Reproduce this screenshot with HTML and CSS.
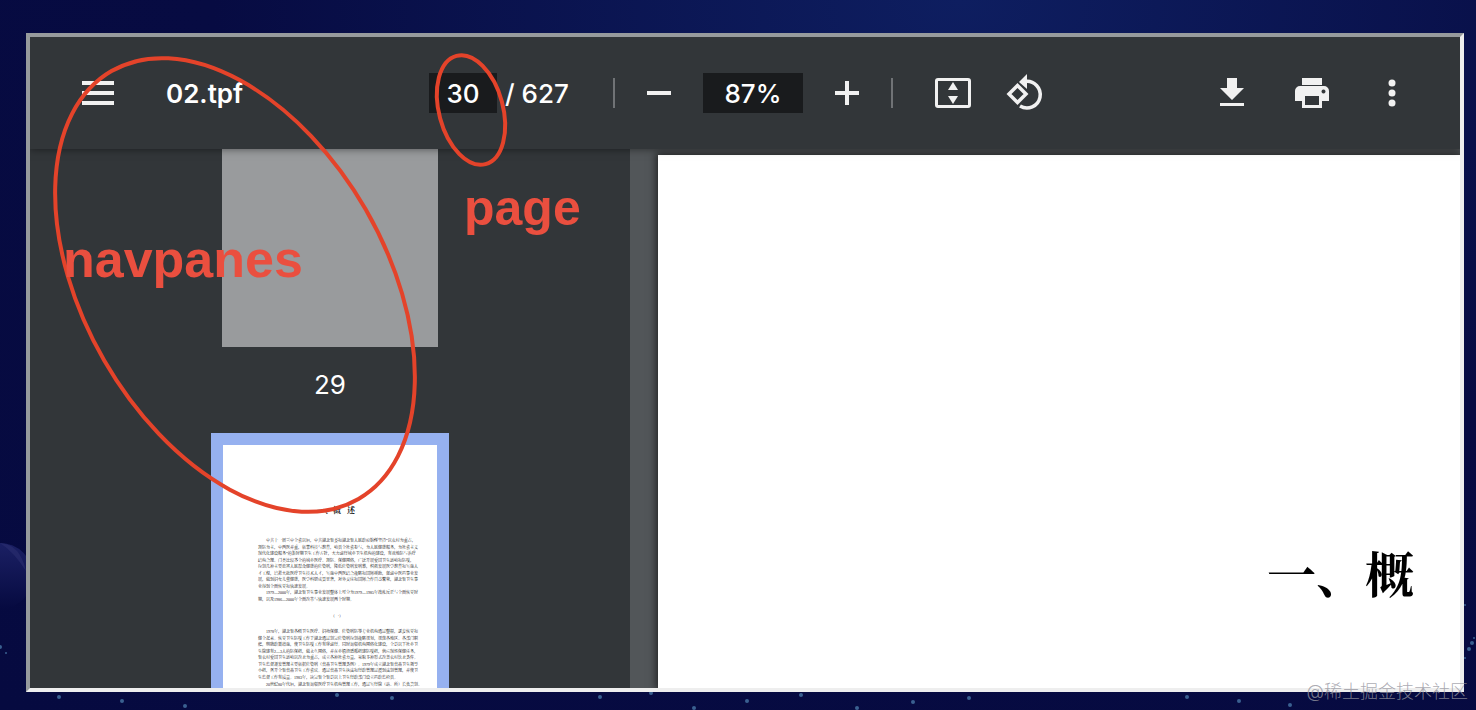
FILE: index.html
```html
<!DOCTYPE html>
<html lang="zh-CN">
<head>
    <meta charset="UTF-8">
    <meta name="viewport" content="width=device-width, initial-scale=1.0">
    <title>02.tpf</title>
    <link rel="stylesheet" href="styles.css">
</head>
<body>
    <!-- Night sky behind the viewer -->
    <svg class="stars" viewBox="0 0 1476 710" preserveAspectRatio="none" aria-hidden="true">
        <defs>
            <linearGradient id="planet" x1="0" y1="0" x2="0" y2="1">
                <stop offset="0" stop-color="#1b2064"/>
                <stop offset="1" stop-color="#060a40"/>
            </linearGradient>
        </defs>
        <circle cx="0" cy="576" r="33" fill="url(#planet)"/>
        <path d="M0 543 Q20 544 26 571 Q14 552 0 543Z" fill="#2b2f70" opacity="0.6"/>
        <g fill="#3a6090">
            <circle cx="0" cy="647" r="2"/><circle cx="6" cy="653" r="1"/>
            <circle cx="59" cy="697" r="2"/><circle cx="122" cy="701" r="2"/>
            <circle cx="185" cy="706" r="2"/><circle cx="337" cy="695" r="2"/>
            <circle cx="392" cy="698" r="2"/><circle cx="600" cy="697" r="2"/>
            <circle cx="651" cy="693" r="2"/><circle cx="694" cy="708" r="2"/>
            <circle cx="747" cy="701" r="2"/><circle cx="801" cy="695" r="2"/>
            <circle cx="857" cy="708" r="2"/><circle cx="913" cy="702" r="2"/>
            <circle cx="969" cy="698" r="2"/><circle cx="1187" cy="697" r="2"/>
            <circle cx="1239" cy="701" r="2"/><circle cx="1290" cy="705" r="2"/>
            <circle cx="1465" cy="605" r="1"/><circle cx="1474" cy="638" r="1"/>
            <circle cx="1472" cy="643" r="2"/><circle cx="1469" cy="649" r="2"/>
            <circle cx="1465" cy="658" r="1"/>
        </g>
    </svg>

    <main class="viewer">
        <header class="toolbar">
            <div class="tools-left">
                <button class="icon-btn" aria-label="Menu">
                    <svg viewBox="0 0 20 20"><path d="M2 4h16v2H2zM2 9h16v2H2zM2 14h16v2H2z"/></svg>
                </button>
                <span class="title">02.tpf</span>
            </div>
            <div class="tools-center">
                <input class="page-input" type="text" value="30" aria-label="Page number">
                <span class="page-total">/ 627</span>
                <span class="divider"></span>
                <button class="icon-btn" aria-label="Zoom out">
                    <svg viewBox="0 0 20 20"><path d="M4 9h12v2H4z"/></svg>
                </button>
                <input class="zoom-input" type="text" value="87%" aria-label="Zoom level">
                <button class="icon-btn" aria-label="Zoom in">
                    <svg viewBox="0 0 20 20"><path d="M4 9h5V4h2v5h5v2h-5v5H9v-5H4z"/></svg>
                </button>
                <span class="divider"></span>
                <button class="icon-btn" aria-label="Fit to page">
                    <svg viewBox="0 0 40 40"><path fill-rule="evenodd" d="M5 5h30a3 3 0 0 1 3 3v24a3 3 0 0 1-3 3H5a3 3 0 0 1-3-3V8a3 3 0 0 1 3-3zm0 3v24h30V8zM20 9l5 8H15zM20 31l-5-8h10z"/></svg>
                </button>
                <button class="icon-btn rotate" aria-label="Rotate">
                    <svg viewBox="0 0 40 40">
                        <path d="M22 1v15l-8-7z"/>
                        <path d="M4 21l8.500-8.500L21 21l-8.500 8.500z" fill="none" stroke="#f1f1f1" stroke-width="3.500"/>
                        <path d="M20 8.500a13.300 13.300 0 1 1-5 24.500" fill="none" stroke="#f1f1f1" stroke-width="3.500"/>
                    </svg>
                </button>
            </div>
            <div class="tools-right">
                <button class="icon-btn" aria-label="Download">
                    <svg viewBox="0 0 40 40"><path d="M15 5h10v10h7L20 27 8 15h7zM8 30h24v3H8z"/></svg>
                </button>
                <button class="icon-btn" aria-label="Print">
                    <svg viewBox="0 0 40 40"><path fill-rule="evenodd" d="M10 5h20v7H10zM8 13h24a5 5 0 0 1 5 5v10h-7v7H10v-7H3V18a5 5 0 0 1 5-5zm5 10v9h14v-9zM31.500 16.500a2 2 0 1 0 .01 0z"/></svg>
                </button>
                <button class="icon-btn" aria-label="More actions">
                    <svg viewBox="0 0 40 40"><circle cx="20" cy="10" r="3.500"/><circle cx="20" cy="20" r="3.500"/><circle cx="20" cy="30" r="3.500"/></svg>
                </button>
            </div>
        </header>

        <div class="content">
            <aside class="sidebar">
                <div class="thumb-blank"></div>
                <span class="thumb-label">29</span>
                <div class="thumb-active">
                    <!-- Drawn at twice the thumbnail size -->
                    <svg viewBox="0 0 428 606">
                        <text class="thumb-title" x="188" y="136">一、概&#160;&#160;&#160;述</text>
                        <g class="thumb-text">
                            <text x="86" y="194">中共十一届三中全会以后，中共湖北省委和湖北省人民政府始终坚持“以农村为重点，</text>
                            <text x="70" y="207">预防为主，中西医并重，依靠科技与教育，动员全社会参与，为人民健康服务，为社会主义</text>
                            <text x="70" y="220">现代化建设服务”的新时期卫生工作方针，大力进行城乡卫生机构的建设，有效地防与治疗</text>
                            <text x="70" y="233">结构合理、门类比较齐全的城乡医疗、预防、保健网络，广泛开展爱国卫生运动和防疫，</text>
                            <text x="70" y="246">控制几种主要危害人民群众健康的传染病，降低传染病发病率，积极发展医学教育和实施人</text>
                            <text x="70" y="259">才工程，培养大批医疗卫生技术人才，实施中西医结合战略和国际援助，促进中医药事业发</text>
                            <text x="70" y="272">展，做到妇女儿童健康，医学科研成果显著，对外交往和国际合作日益繁荣，湖北省卫生事</text>
                            <text x="70" y="285">业得到全面恢复和快速发展。</text>
                            <text x="86" y="298">1979—2000年，湖北省卫生事业发展整体上可分为1979—1985年拨乱反正与全面恢复时</text>
                            <text x="70" y="312">期，以及1986—2000年全面改革与快速发展两个时期。</text>
                            <text x="216" y="346">（一）</text>
                            <text x="86" y="376">1978年，湖北省各级卫生医疗、妇幼保健、传染病防等专业机构通过整顿，逐步恢复和</text>
                            <text x="70" y="389">健全起来。恢复卫生防疫工作于湖北通过制定传染病控制战略规划，规范各地区、各部门职</text>
                            <text x="70" y="402">能，明确政策措施，使卫生防疫工作有序进行。同时加强机构网络化建设，全县以下社乡卫</text>
                            <text x="70" y="415">生院建有2—3人的防保组，做永久网络，并在乡镇街道都组建防疫组，供应现场保健任务，</text>
                            <text x="70" y="428">省农村爱国卫生运动以改水为重点，成立各种社会力量，采取多种形式改善农村饮水条件。</text>
                            <text x="70" y="441">卫生监督颁发管理主要依据传染病《食品卫生管理条例》。1979年成立湖北省食品卫生领导</text>
                            <text x="70" y="454">小组，召开全省食品卫生工作会议。通过食品卫生执法和行政管理过渡到法制管理，并使卫</text>
                            <text x="70" y="467">生监督工作有质量。1983年，决定省全省县以上卫生行政部门设立药政监检员。</text>
                            <text x="86" y="481">20世纪80年代后，湖北省加强医疗卫生机构管理工作，通过实行院（站、所）长负责制、</text>
                        </g>
                    </svg>
                </div>
            </aside>
            <section class="document">
                <article class="page">
                    <h1>一、概</h1>
                </article>
            </section>
        </div>
    </main>

    <!-- Hand-drawn notes on top of the viewer -->
    <div class="notes">
        <svg viewBox="0 0 1476 710">
            <ellipse cx="235" cy="285" rx="247" ry="151" transform="rotate(60 235 285)"/>
            <ellipse cx="471" cy="110" rx="56" ry="32" transform="rotate(75 471 110)"/>
        </svg>
        <span class="note note-nav">navpanes</span>
        <span class="note note-page">page</span>
    </div>
    <span class="watermark">@稀土掘金技术社区</span>
</body>
</html>
```

FILE: styles.css
```css
* {
    margin: 0;
    padding: 0;
    box-sizing: border-box;
}

body {
    position: relative;
    display: flex;
    height: 100vh;
    padding: 33px 12px 18px 26px;
    overflow: hidden;
    font-family: Inter, "Noto Sans CJK SC", sans-serif;
    font-size: 26px;
    color: #fff;
    background: radial-gradient(ellipse at 65% 0, #0e1e60 0%, #070b42 55%, #060a40 100%);
}

.stars {
    position: absolute;
    top: 0;
    left: 0;
    width: 100%;
    height: 100%;
}

.viewer {
    position: relative;
    z-index: 0;
    flex: 1;
    display: flex;
    flex-direction: column;
    min-width: 0;
    overflow: hidden;
    border: 4px solid;
    border-color: #979b9d #eeeeee #eeeeee #979b9d;
    background: #323639;
}

/* Toolbar */
.toolbar {
    position: relative;
    z-index: 1;
    display: grid;
    grid-template-columns: 1fr auto 1fr;
    align-items: center;
    height: 112px;
    padding: 0 48px;
    background: #323639;
    box-shadow: 0 0 8px rgba(0, 0, 0, 0.5);
}

.tools-left,
.tools-center,
.tools-right {
    display: flex;
    align-items: center;
}

.tools-left {
    gap: 48px;
}

.tools-center {
    padding-right: 16px;
}

.tools-right {
    gap: 40px;
    justify-content: flex-end;
}

.title {
    font-weight: 600;
}

.icon-btn {
    width: 40px;
    height: 40px;
    border: none;
    background: none;
    cursor: pointer;
}

.icon-btn svg {
    display: block;
    width: 40px;
    height: 40px;
    fill: #f1f1f1;
}

.toolbar input {
    height: 40px;
    border: none;
    background: #191b1d;
    color: #fff;
    font-family: inherit;
    font-size: 26px;
    font-weight: 500;
    text-align: center;
}

.page-input {
    width: 68px;
}

.zoom-input {
    width: 100px;
    margin: 0 24px;
}

.page-total {
    width: 92px;
    margin-left: 8px;
    font-weight: 500;
    white-space: nowrap;
}

.divider {
    width: 2px;
    height: 30px;
    margin: 0 24px 0 16px;
    background: #707376;
}

.icon-btn + .divider {
    margin: 0 40px 0 24px;
}

.rotate {
    margin-left: 32px;
}

/* Sidebar and document */
.content {
    flex: 1;
    display: flex;
    min-height: 0;
}

.sidebar {
    flex: 0 0 600px;
    display: flex;
    flex-direction: column;
    align-items: center;
    overflow: hidden;
}

.thumb-blank {
    flex: none;
    width: 216px;
    height: 198px;
    background: #999b9d;
}

.thumb-label {
    flex: none;
    margin: 22px 0 32px;
    line-height: 32px;
}

.thumb-active {
    flex: none;
    width: 238px;
    border: 12px solid #96b1f0;
    background: #fff;
}

.thumb-active svg {
    display: block;
    width: 100%;
}

.thumb-title {
    font-family: "Noto Serif CJK SC", "Noto Sans CJK SC", serif;
    font-size: 16px;
    font-weight: 700;
    fill: #222;
}

.thumb-text {
    font-family: "Liberation Serif", "Noto Serif CJK SC", "Noto Sans CJK SC", serif;
    font-size: 8px;
    fill: #111;
}

.document {
    flex: 1;
    display: flex;
    min-width: 0;
    padding: 6px 0 0 28px;
    overflow: hidden;
    background: #525659;
}

.page {
    flex: 1;
    padding: 381px 46px 0 0;
    background: #fff;
    box-shadow: 0 0 8px 2px rgba(0, 0, 0, 0.6);
    color: #000;
    text-align: right;
}

.page h1 {
    font-family: "Noto Serif CJK SC", "Noto Sans CJK SC", serif;
    font-size: 49px;
    font-weight: 700;
    line-height: 72px;
}

/* Notes */
.notes {
    position: absolute;
    z-index: 1;
    top: 0;
    left: 0;
    width: 1476px;
    height: 710px;
    pointer-events: none;
}

.notes svg {
    display: block;
    width: 100%;
    height: 100%;
    fill: none;
    stroke: #e4432a;
    stroke-width: 4;
}

.note {
    position: absolute;
    font-family: "Liberation Sans", Arial, sans-serif;
    font-size: 52px;
    font-weight: 700;
    line-height: 60px;
    color: #ea4f3f;
}

.note-nav {
    top: 229px;
    left: 63px;
}

.note-page {
    top: 178px;
    left: 464px;
    font-size: 50px;
}

.watermark {
    position: absolute;
    z-index: 1;
    right: 8px;
    bottom: 6px;
    font-size: 18px;
    font-weight: 300;
    line-height: 24px;
    color: rgba(150, 150, 160, 0.8);
}
```
